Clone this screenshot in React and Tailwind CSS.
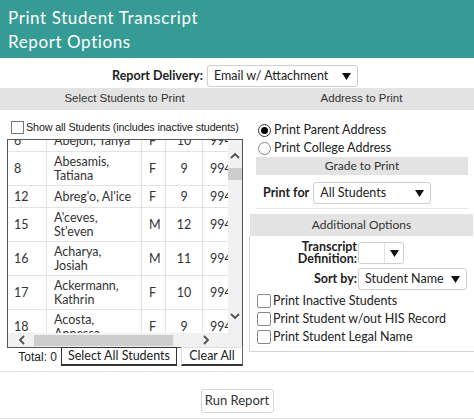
import React from 'react'

const geo = "font-['Lato',sans-serif]"
const arial = "font-['Liberation_Sans',Arial,sans-serif]"

const students = [
    { id: 6, name: ['Abejon, Tanya'], sex: 'F', grade: 10 },
    { id: 8, name: ['Abesamis,', 'Tatiana'], sex: 'F', grade: 9 },
    { id: 12, name: ["Abreg'o, Al'ice"], sex: 'F', grade: 9 },
    { id: 15, name: ["A'ceves,", "St'even"], sex: 'M', grade: 12 },
    { id: 16, name: ['Acharya,', 'Josiah'], sex: 'M', grade: 11 },
    { id: 17, name: ['Ackermann,', 'Kathrin'], sex: 'F', grade: 10 },
    { id: 18, name: ['Acosta,', 'Annessa'], sex: 'F', grade: 9 },
]

function Caret() {
    return (
        <svg width="9" height="7" viewBox="0 0 9 7" className="shrink-0">
            <polygon points="0,0 9,0 4.5,7" fill="#111" />
        </svg>
    )
}

function Chevron({ dir }) {
    const pts = {
        up: '1,6 5,2 9,6',
        down: '1,2 5,6 9,2',
        left: '6,1 2,5 6,9',
        right: '3,1 7,5 3,9',
    }[dir]
    return (
        <svg width="10" height="10" viewBox="0 0 10 10" className="shrink-0">
            <polyline points={pts} fill="none" stroke="#505050" strokeWidth="1.8" />
        </svg>
    )
}

function Select({ value, className }) {
    return (
        <div className={`flex h-[22px] items-center justify-between rounded-[3px] border border-[#cfcfcf] bg-white pl-[6px] pr-[6px] text-[12.5px] text-[#222] ${className}`}>
            <span>{value}</span>
            <Caret />
        </div>
    )
}

function Checkbox() {
    return <span className="h-[14px] w-[14px] shrink-0 rounded-[2px] border border-[#8a8a8a] bg-white" />
}

function StudentTable() {
    return (
        <div className="ml-[7px] flex h-[209px] w-[236px] flex-col border border-[#555] bg-white">
            <div className="flex h-[193px]">
                <div className="flex-1 overflow-hidden">
                    <div className="-mt-[10px] w-[260px]">
                        {students.map((s) => (
                            <div
                                key={s.id}
                                className={`flex border-b border-[#e4e4e4] text-[12.5px] leading-[14px] text-[#333] ${s.name.length > 1 ? 'h-[34px]' : 'h-[22px]'}`}
                            >
                                <div className="flex w-[39px] items-center border-r border-[#e4e4e4] pl-[6px]">{s.id}</div>
                                <div className="flex w-[95px] flex-col justify-center border-r border-[#e4e4e4] pl-[7px]">
                                    {s.name.map((n) => (
                                        <span key={n}>{n}</span>
                                    ))}
                                </div>
                                <div className="flex w-[24px] items-center border-r border-[#e4e4e4] pl-[7px]">{s.sex}</div>
                                <div className="flex w-[37px] items-center justify-center border-r border-[#e4e4e4]">{s.grade}</div>
                                <div className="flex flex-1 items-center pl-[7px]">994</div>
                            </div>
                        ))}
                    </div>
                </div>
                <div className="flex w-[14px] flex-col items-center bg-[#f1f1f1]">
                    <div className="mt-[12px]"><Chevron dir="up" /></div>
                    <div className="mt-[6px] h-[12px] w-full bg-[#cdcdcd]" />
                    <div className="flex-1" />
                    <div className="mb-[11px]"><Chevron dir="down" /></div>
                </div>
            </div>
            <div className="flex h-[14px] items-center bg-[#f1f1f1]">
                <div className="ml-[10px]"><Chevron dir="left" /></div>
                <div className="ml-[6px] h-[11px] w-[139px] bg-[#cdcdcd]" />
                <div className="ml-[28px]"><Chevron dir="right" /></div>
                <div className="flex-1" />
            </div>
        </div>
    )
}

export default function App() {
    return (
        <div className={`h-[420px] w-[474px] overflow-hidden bg-white text-[#333] ${geo}`}>
            <header className="h-[58px] bg-[#359b94] px-[8px] pt-[6px] text-[17px] leading-[24px] tracking-[0.6px] text-white">
                <div>Print Student Transcript</div>
                <div>Report Options</div>
            </header>

            <div className="flex h-[30px] justify-center pt-[7px] pr-[4px]">
                <div className="flex items-start gap-[4px]">
                    <span className="flex h-[22px] items-center text-[12.5px] font-bold text-[#222]">Report Delivery:</span>
                    <Select value="Email w/ Attachment" className="w-[151px]" />
                </div>
            </div>

            <div className={`flex h-[22px] items-center bg-[#e3e3e3] text-[11.5px] text-[#333] ${arial}`}>
                <div className="w-[249px] text-center">Select Students to Print</div>
                <div className="flex-1 text-center">Address to Print</div>
            </div>

            <div className="flex border-b border-[#e6e6e6] pb-[5px]">
                {/* left column */}
                <div className="w-[249px]">
                    <div className={`ml-[11px] mt-[11px] flex h-[13px] items-center gap-[2px] whitespace-nowrap text-[10.8px] tracking-[-0.15px] text-[#222] ${arial}`}>
                        <span className="h-[13px] w-[13px] shrink-0 border border-[#777] bg-white" />
                        <span>Show all Students (includes inactive students)</span>
                    </div>
                    <div className="mt-[5px]">
                        <StudentTable />
                    </div>
                    <div className="-mt-[1px] flex items-center justify-end gap-[4px] pr-[6px]">
                        <span className={`text-[12px] text-[#222] ${arial}`}>Total: 0</span>
                        <button className="h-[19px] w-[116px] border border-b-2 border-[#333] bg-white text-[12.5px] leading-none text-[#222]">
                            Select All Students
                        </button>
                        <button className="h-[19px] w-[62px] border border-b-2 border-t-[#e0e0e0] border-l-[#e0e0e0] border-r-[#666] border-b-[#333] bg-white text-[12.5px] leading-none text-[#222]">
                            Clear All
                        </button>
                    </div>
                </div>

                {/* right column */}
                <div className="flex-1 pt-[11px]">
                    <div className="flex h-[18px] items-center gap-[3px] pl-[9px] text-[12.5px] text-[#222]">
                        <span className="flex h-[13px] w-[13px] items-center justify-center rounded-full border border-[#333] bg-white">
                            <span className="h-[7px] w-[7px] rounded-full bg-black" />
                        </span>
                        Print Parent Address
                    </div>
                    <div className="flex h-[18px] items-center gap-[3px] pl-[9px] text-[12.5px] text-[#222]">
                        <span className="h-[13px] w-[13px] rounded-full border border-[#888] bg-white" />
                        Print College Address
                    </div>

                    <div className="ml-[7px] mr-[6px] flex h-[18px] items-center justify-center bg-[#e3e3e3] text-[12px] text-[#333]">
                        Grade to Print
                    </div>

                    <div className="mt-[7px] flex h-[22px] items-center gap-[4px] pl-[14px]">
                        <span className="text-[12.5px] font-bold text-[#222]">Print for</span>
                        <Select value="All Students" className="w-[118px]" />
                    </div>

                    <div className="ml-[7px] mr-[6px] mt-[4px] border-t border-[#e6e6e6]" />

                    <div className="ml-[1px] mr-[1px] mt-[5px] flex h-[22px] items-center justify-center bg-[#e3e3e3] text-[12px] text-[#333]">
                        Additional Options
                    </div>

                    <div className="border-b border-l border-[#d4d4d4] pb-[5px] pt-[6px]">
                        <div className="flex h-[22px] items-center gap-[1px]">
                            <div className="w-[107px] text-right text-[12.5px] font-bold leading-[12px] text-[#222]">
                                Transcript
                                <br />
                                Definition:
                            </div>
                            <div className="flex h-[22px] w-[46px] rounded-[3px] border border-[#cfcfcf] bg-white">
                                <div className="w-[26px] border-r border-[#e2e2e2]" />
                                <div className="flex flex-1 items-center justify-center">
                                    <Caret />
                                </div>
                            </div>
                        </div>
                        <div className="mt-[4px] flex h-[22px] items-center gap-[1px]">
                            <div className="w-[107px] text-right text-[12.5px] font-bold text-[#222]">Sort by:</div>
                            <Select value="Student Name" className="w-[109px]" />
                        </div>
                        <div className="mt-[2px] pl-[7px] text-[12.5px] text-[#222]">
                            {['Print Inactive Students', 'Print Student w/out HIS Record', 'Print Student Legal Name'].map((t) => (
                                <div key={t} className="flex h-[18px] items-center gap-[2px]">
                                    <Checkbox />
                                    <span>{t}</span>
                                </div>
                            ))}
                        </div>
                    </div>
                </div>
            </div>

            <div className="flex justify-center border-b border-[#e6e6e6] pb-[5px] pt-[17px]">
                <button className="h-[24px] w-[73px] rounded-[3px] border border-[#d6d6d6] bg-white text-[13px] text-[#333]">
                    Run Report
                </button>
            </div>
        </div>
    )
}
